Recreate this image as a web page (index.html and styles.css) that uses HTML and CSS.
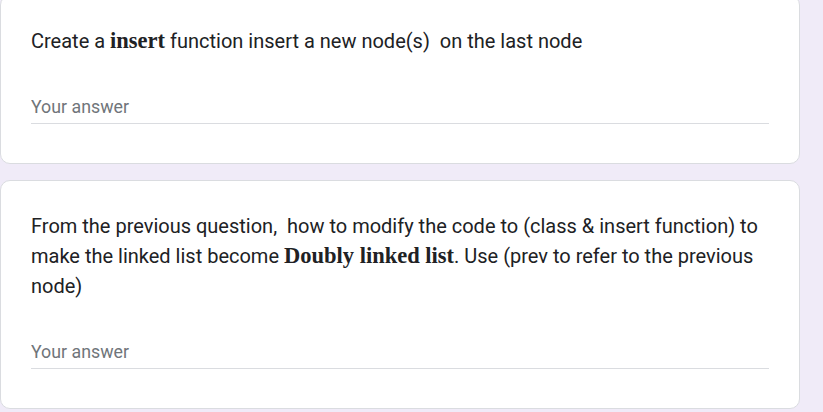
FILE: index.html
```html
<!DOCTYPE html>
<html lang="en">
<head>
  <meta charset="UTF-8" />
  <meta name="viewport" content="width=device-width, initial-scale=1.0" />
  <title>Quiz</title>
  <link rel="stylesheet" href="styles.css">
</head>
<body>

  <div class="form">
    <div class="card first">
      <div class="question">Create a <b class="serif">insert</b> function insert a new node(s)&nbsp; on the last node</div>
      <input class="answer" type="text" placeholder="Your answer" />
    </div>

    <div class="card">
      <div class="question">From the previous question,&nbsp; how to modify the code to (class &amp; insert function) to make the linked list become <b class="serif">Doubly linked list</b>. Use (prev to refer to the previous node)</div>
      <input class="answer" type="text" placeholder="Your answer" />
    </div>
  </div>

</body>
</html>
```

FILE: styles.css
```css
:root {
  --bg: #f0ebf8;
  --border: #dadce0;
  --text: #202124;
  --muted: #70757a;
}

* {
  box-sizing: border-box;
}

body {
  margin: 0;
  background: var(--bg);
  font-family: Roboto, Arial, sans-serif;
  color: var(--text);
  overflow: hidden;
}

.form {
  width: 800px;
  display: flex;
  flex-direction: column;
  gap: 16px;
  margin-top: -5px;
}

.card {
  background: white;
  border: 1px solid var(--border);
  border-radius: 10px;
  padding: 30px 30px 39px;
  display: flex;
  flex-direction: column;
}

.question {
  font-size: 20px;
  line-height: 30px;
}

.serif {
  font-family: 'Liberation Serif', serif;
  font-weight: bold;
  font-size: 22.5px;
}

.answer {
  margin-top: 39px;
  width: 738px;
  border: none;
  border-bottom: 1px solid var(--border);
  padding: 0 0 6px;
  font-family: Roboto, Arial, sans-serif;
  font-size: 17.8px;
  line-height: 22px;
  height: 29px;
  color: var(--text);
  background: transparent;
  outline: none;
}

.answer::placeholder {
  color: var(--muted);
}
```
